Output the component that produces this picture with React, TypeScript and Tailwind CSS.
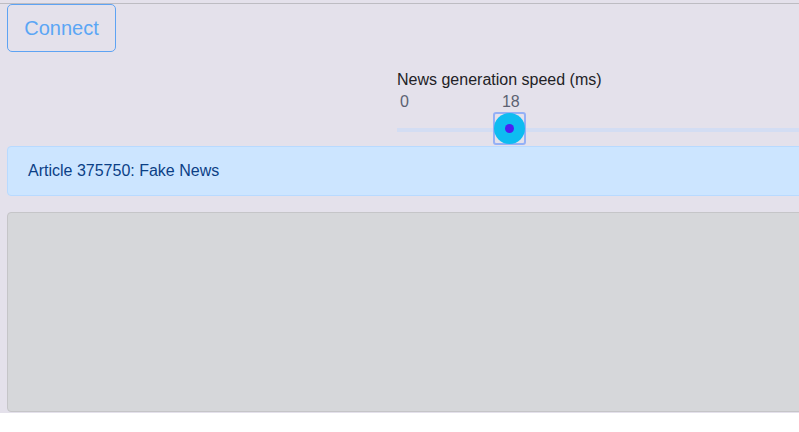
import React from "react";

export default function App() {
  return (
    <div
      className="w-full overflow-hidden bg-white"
      style={{ fontFamily: '"Liberation Sans", Arial, sans-serif' }}
    >
      <div className="bg-[#e4e1eb] pt-[3px] pb-[1px]">
        <div className="border-t border-[#bdbcc2]" />
        <div className="pl-[7px]">
          <button className="h-[48px] w-[109px] rounded-[5px] border border-[#5ea3f3] text-[20px] text-[#5ba6f5] leading-none">
            Connect
          </button>

          <div className="mt-[18px] ml-[390px] flex flex-col">
            <div className="text-[16px] leading-[20px] text-[#222226]">
              News generation speed (ms)
            </div>
            <div className="mt-[2px] flex text-[16px] leading-[20px] text-[#5c6172]">
              <span className="ml-[3px]">0</span>
              <span className="ml-[93px]">18</span>
            </div>
            <div className="relative h-[34px]">
              <div className="mt-[16px] h-[4px] bg-[#d3ddf3]" />
              <div className="absolute left-[96px] top-0 flex h-[33px] w-[33px] items-center justify-center rounded-[3px] border-2 border-[#94b0f6]">
                <div className="flex h-[31px] w-[31px] shrink-0 items-center justify-center rounded-full bg-[#0ebcf1]">
                  <div className="h-[9px] w-[9px] rounded-full bg-[#4a20f2]" />
                </div>
              </div>
            </div>
          </div>

          <div className="mr-[-6px] flex h-[50px] items-center rounded-[4px] border border-[#b8daff] bg-[#cce5ff] pl-[20px] text-[16px] text-[#0b3f86]">
            Article 375750: Fake News
          </div>

          <div className="mt-[16px] mr-[-6px] h-[200px] rounded-[4px] border border-[#c5c5c8] bg-[#d6d7da]" />
        </div>
      </div>
    </div>
  );
}
